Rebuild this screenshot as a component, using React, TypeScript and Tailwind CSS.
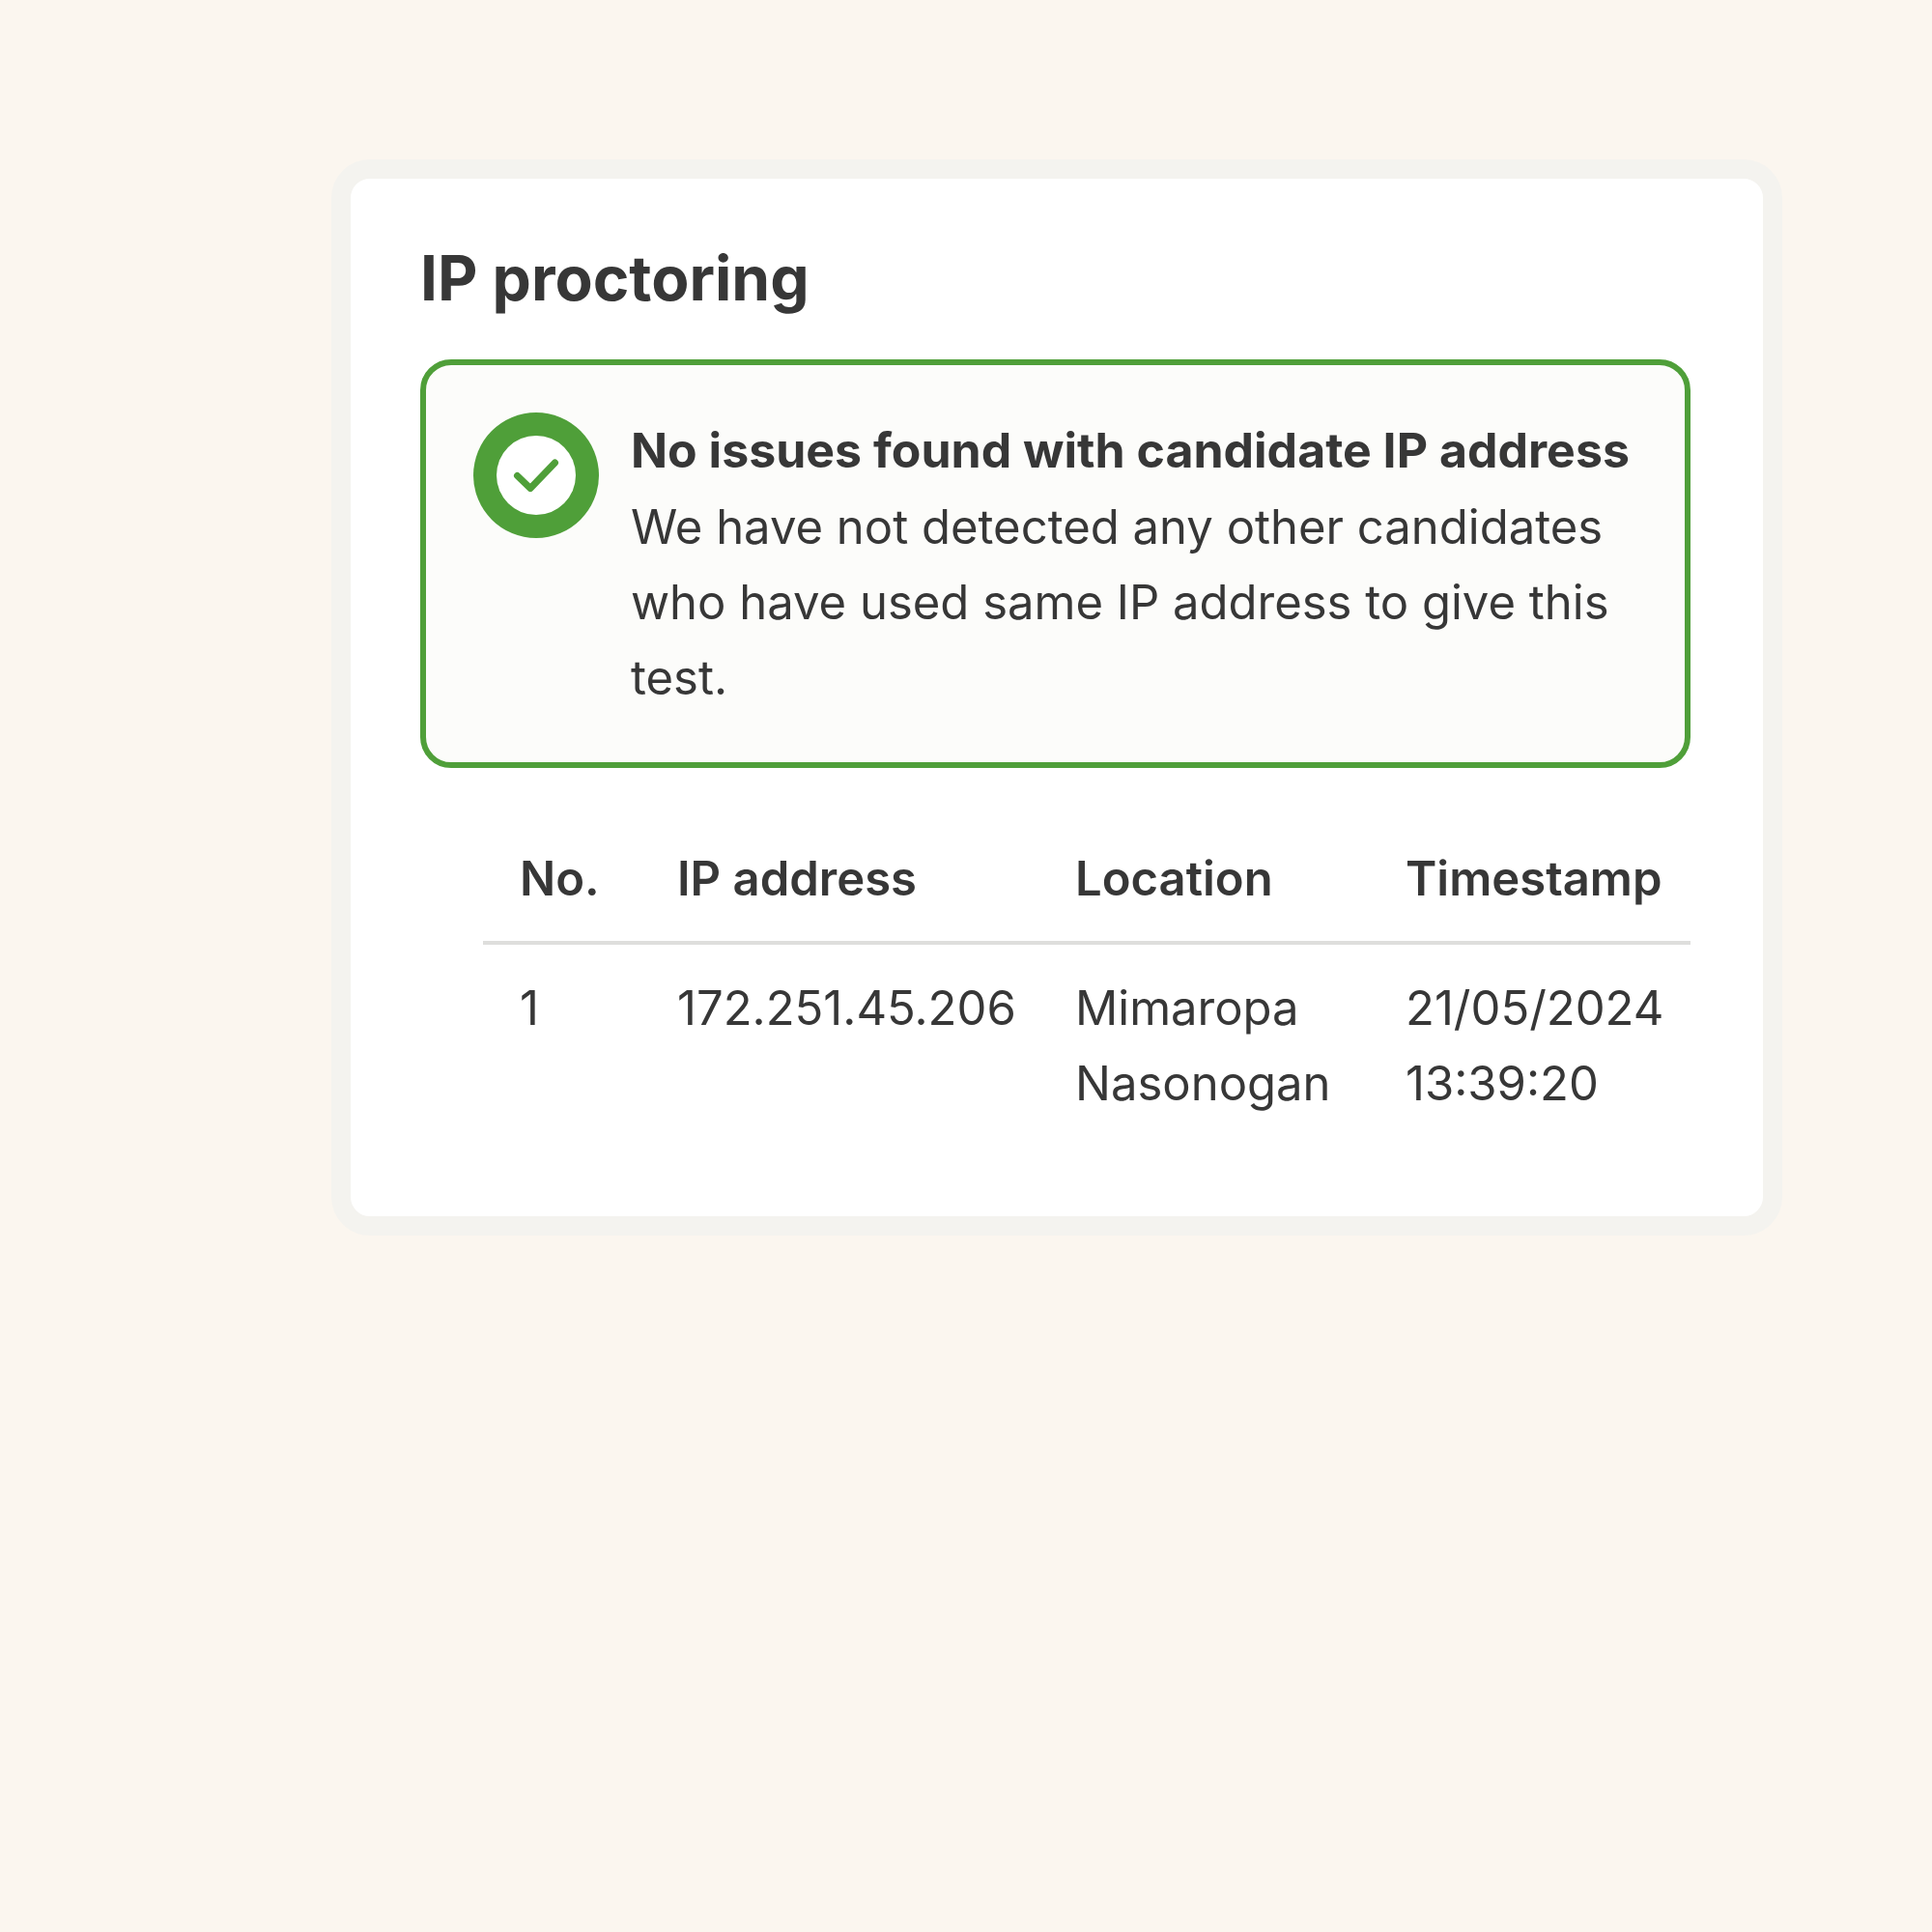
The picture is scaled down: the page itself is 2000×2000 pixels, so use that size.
type IpRecord = {
	no: number;
	ip: string;
	location: string;
	timestamp: string;
};

const records: IpRecord[] = [
	{
		no: 1,
		ip: "172.251.45.206",
		location: "Mimaropa Nasonogan",
		timestamp: "21/05/2024 13:39:20",
	},
];

const columns = [
	{ label: "No.", width: "w-[163px]" },
	{ label: "IP address", width: "w-[412px]" },
	{ label: "Location", width: "w-[342px]" },
	{ label: "Timestamp", width: "w-auto" },
];

function CheckBadge() {
	return (
		<svg
			className="h-[130px] w-[130px] shrink-0"
			viewBox="0 0 130 130"
			fill="none"
		>
			<title>Success</title>
			<circle cx="65" cy="65" r="65" fill="#4f9f39" />
			<circle cx="65" cy="65" r="41" fill="#ffffff" />
			<path
				stroke="#4f9f39"
				strokeLinecap="round"
				strokeLinejoin="round"
				strokeWidth={7}
				d="M45.5 65.5L59 78.5L84.5 52"
			/>
		</svg>
	);
}

function IpTable({ rows }: { rows: IpRecord[] }) {
	const cell = "pt-[27px] pb-[25px] pl-[38px]";

	return (
		<div className="mt-[49px] pl-[65px]">
			<table className="w-full table-fixed border-separate border-spacing-0 text-left text-[49px] leading-[78px]">
				<thead>
					<tr>
						{columns.map((column) => (
							<th
								key={column.label}
								className={`border-[#dededc] border-b-4 font-semibold ${cell} ${column.width}`}
								scope="col"
							>
								{column.label}
							</th>
						))}
					</tr>
				</thead>
				<tbody>
					{rows.map((row) => (
						<tr key={row.no} className="align-top">
							<td className={cell}>{row.no}</td>
							<td className={cell}>{row.ip}</td>
							<td className={cell}>{row.location}</td>
							<td className={cell}>{row.timestamp}</td>
						</tr>
					))}
				</tbody>
			</table>
		</div>
	);
}

export default function App() {
	return (
		<main className="min-h-screen bg-[#fbf6ef] pt-[165px] pr-[155px] pb-20 pl-[343px] font-['Inter',sans-serif] text-[#373737]">
			<section className="rounded-[40px] border-[#f4f3ef] border-[20px] bg-white pt-[55px] pr-[75px] pb-[73px] pl-[72px]">
				<h1 className="font-bold text-[64px] leading-[96px]">IP proctoring</h1>

				<div className="mt-9 flex items-start gap-[33px] rounded-[32px] border-[#4f9f39] border-[6px] bg-[#fcfcfa] px-[49px] pt-[49px] pb-12">
					<CheckBadge />
					<div className="text-[49px] leading-[78px]">
						<h2 className="font-bold text-[50px]">
							No issues found with candidate IP address
						</h2>
						<p className="mt-0.5">
							We have not detected any other candidates who have used same IP
							address to give this test.
						</p>
					</div>
				</div>

				<IpTable rows={records} />
			</section>
		</main>
	);
}
